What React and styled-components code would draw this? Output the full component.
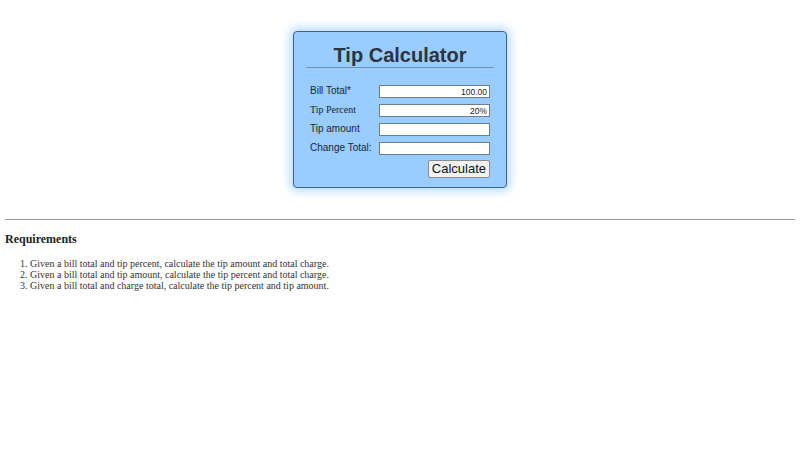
import React from 'react';
import styled, { createGlobalStyle } from 'styled-components';

const GlobalStyle = createGlobalStyle`
  body {
    margin: 5px;
    font-family: "Liberation Serif", "Times New Roman", serif;
    color: #222;
    background: #fff;
  }
`;

const fields = [
  { label: 'Bill Total*', value: '100.00' },
  { label: 'Tip Percent', value: '20%', serif: true },
  { label: 'Tip amount', value: '' },
  { label: 'Change Total:', value: '' },
];

const App = () => (
  <>
    <GlobalStyle />
    <CardWrap>
      <Card>
        <Title>Tip Calculator</Title>
        <Form>
          {fields.map((f) => (
            <Row key={f.label}>
              <Label $serif={f.serif}>{f.label}</Label>
              <Input type="text" defaultValue={f.value} />
            </Row>
          ))}
          <Actions>
            <Button type="button">Calculate</Button>
          </Actions>
        </Form>
      </Card>
    </CardWrap>
    <Rule />
    <Heading>Requirements</Heading>
    <List>
      <li>Given a bill total and tip percent, calculate the tip amount and total charge.</li>
      <li>Given a bill total and tip amount, calculate the tip percent and total charge.</li>
      <li>Given a bill total and charge total, calculate the tip percent and tip amount.</li>
    </List>
  </>
);

/* styled-components */
const CardWrap = styled.div`
  display: flex;
  justify-content: center;
  padding-top: 26px;
`;

const Card = styled.div`
  width: 214px;
  box-sizing: border-box;
  padding: 0 12px 9px;
  background: #99ccff;
  border: 1px solid #3f5f96;
  border-radius: 4px;
  box-shadow: 0 0 10px 3px rgba(153, 204, 255, 0.75);
`;

const Title = styled.h1`
  margin: 0;
  padding-top: 12px;
  font-family: "Liberation Sans", Arial, sans-serif;
  font-size: 20px;
  line-height: 23px;
  font-weight: bold;
  color: #2b3440;
  text-align: center;
  border-bottom: 1px solid #7391b4;
`;

const Form = styled.div`
  display: flex;
  flex-direction: column;
  gap: 6px;
  padding: 17px 4px 0;
`;

const Row = styled.div`
  display: grid;
  grid-template-columns: 69px 111px;
  align-items: center;
  height: 13px;
`;

const Label = styled.label`
  font-family: ${(p) =>
    p.$serif
      ? '"Liberation Serif", "Times New Roman", serif'
      : '"Liberation Sans", Arial, sans-serif'};
  font-size: 10px;
  color: #1e2530;
  white-space: nowrap;
  position: relative;
  top: -1px;
`;

const Input = styled.input`
  box-sizing: border-box;
  width: 111px;
  height: 13px;
  margin: 0;
  padding: 0 2px;
  border: 1px solid #6f7c8c;
  background: #fff;
  font-family: "Liberation Sans", Arial, sans-serif;
  font-size: 8.5px;
  color: #222;
  text-align: right;
  outline: none;
`;

const Actions = styled.div`
  display: flex;
  justify-content: flex-end;
  margin-top: -1px;
  width: 180px;
`;

const Button = styled.button`
  height: 18px;
  padding: 0 3px;
  font-family: "Liberation Sans", Arial, sans-serif;
  font-size: 13px;
  line-height: 16px;
  color: #111;
  background: #f2f2f2;
  border: 1px solid #8a8a8a;
  border-radius: 2px;
`;

const Rule = styled.hr`
  margin: 31px 0 0;
  border: 0;
  border-top: 1px solid #9a9a9a;
`;

const Heading = styled.h3`
  margin: 12px 0 0;
  font-size: 12px;
  line-height: 14px;
  font-weight: bold;
  color: #222;
`;

const List = styled.ol`
  margin: 12px 0 0;
  padding-left: 25px;
  font-size: 10px;
  line-height: 11px;
  color: #333;
`;

export default App;
